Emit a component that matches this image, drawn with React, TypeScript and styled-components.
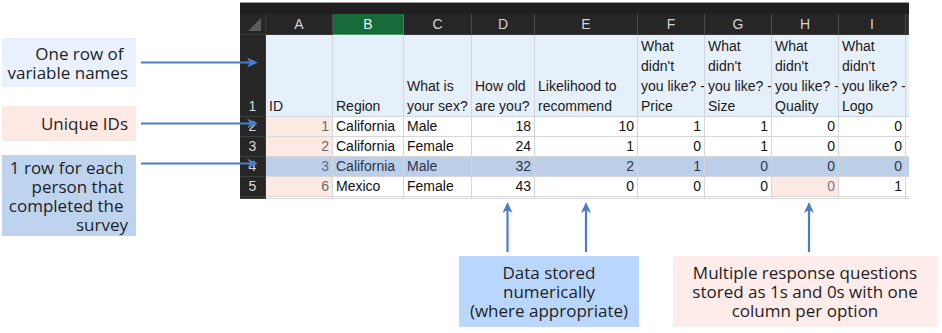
import React from 'react';
import styled, { createGlobalStyle } from 'styled-components';

const GlobalStyle = createGlobalStyle`
  html, body { margin: 0; padding: 0; background: #ffffff; }
  body { width: 942px; height: 333px; overflow: hidden; }
`;

const Page = styled.div`
  position: relative;
  width: 942px;
  height: 333px;
  display: grid;
  grid-template-columns: 240px 669px 1fr;
  grid-template-rows: 200px 1fr;
  font-family: 'Open Sans', 'Liberation Sans', sans-serif;
`;

/* ---------- left notes ---------- */
const NotesColumn = styled.div`
  grid-column: 1;
  grid-row: 1 / span 2;
  display: flex;
  flex-direction: column;
  align-items: flex-start;
  padding: 38px 0 0 2px;
`;

const NoteBox = styled.div<{ $bg: string; $h: number; $mt: number }>`
  width: 134px;
  height: ${(p) => p.$h}px;
  margin-top: ${(p) => p.$mt}px;
  box-sizing: border-box;
  padding-right: 8px;
  background: ${(p) => p.$bg};
  display: flex;
  flex-direction: column;
  justify-content: center;
  align-items: flex-end;
  font-size: 17px;
  line-height: 19px;
  color: #1e1e24;
  white-space: pre;
`;

/* ---------- spreadsheet ---------- */
const Sheet = styled.div`
  grid-column: 2;
  grid-row: 1;
  margin-top: 2px;
  border-top: 1px solid #9a9a9a;
  background: #1f1f1f;
  display: grid;
  grid-template-columns: 26px 67px 71px 68px 63px 103px 67px 67px 67px 67px 3px;
  grid-template-rows: 11px 21px 82px 20px 20px 20px 20px 2px;
  align-self: start;
  font-family: 'Liberation Sans', Arial, sans-serif;
  font-size: 14px;
  overflow: hidden;
`;

const TopStrip = styled.div`
  grid-column: 1 / -1;
  background: #1f1f1f;
`;

const Corner = styled.div`
  position: relative;
  background: #262626;
  border-right: 1px solid #3a3a3a;
  border-bottom: 1px solid #3a3a3a;
  &::after {
    content: '';
    position: absolute;
    right: 4px;
    bottom: 3px;
    width: 0;
    height: 0;
    border-left: 13px solid transparent;
    border-bottom: 13px solid #5c5c5c;
  }
`;

const ColHead = styled.div<{ $active?: boolean }>`
  box-sizing: border-box;
  background: ${(p) => (p.$active ? '#176b3a' : '#262626')};
  border-right: 1px solid ${(p) => (p.$active ? '#2f8a54' : '#4a4a4a')};
  border-bottom: 1px solid ${(p) => (p.$active ? '#4fa06f' : '#3a3a3a')};
  color: ${(p) => (p.$active ? '#e8f2ec' : '#d4d4d4')};
  display: flex;
  align-items: center;
  justify-content: center;
  padding-top: 1px;
  line-height: 19px;
`;

const RowHead = styled.div<{ $tall?: boolean }>`
  box-sizing: border-box;
  background: #262626;
  border-bottom: 1px solid #3f3f3f;
  border-right: 1px solid #3a3a3a;
  color: #d8d8d8;
  display: flex;
  align-items: ${(p) => (p.$tall ? 'flex-end' : 'center')};
  justify-content: center;
  line-height: ${(p) => (p.$tall ? '20px' : '19px')};
`;

const HeaderCell = styled.div`
  box-sizing: border-box;
  background: #e6f0fb;
  border-right: 1px solid #cfd6df;
  border-bottom: 1px solid #cfd6df;
  padding: 0 0 0 3px;
  display: flex;
  flex-direction: column;
  justify-content: flex-end;
  overflow: hidden;
  white-space: nowrap;
  line-height: 20px;
  color: #1a1a1a;
`;

const Cell = styled.div<{ $bg: string; $fg: string; $right?: boolean }>`
  box-sizing: border-box;
  background: ${(p) => p.$bg};
  color: ${(p) => p.$fg};
  border-right: 1px solid #d6d6d6;
  border-bottom: 1px solid #d6d6d6;
  padding: 0 3px;
  line-height: 19px;
  text-align: ${(p) => (p.$right ? 'right' : 'left')};
  white-space: nowrap;
  overflow: hidden;
`;

/* ---------- bottom notes ---------- */
const BottomRow = styled.div`
  grid-column: 2 / span 2;
  grid-row: 2;
  display: flex;
  align-items: flex-start;
  padding: 56px 0 0 219px;
  gap: 34px;
`;

const BottomBox = styled.div<{ $bg: string; $w: number }>`
  width: ${(p) => p.$w}px;
  height: 71px;
  background: ${(p) => p.$bg};
  display: flex;
  flex-direction: column;
  align-items: center;
  justify-content: center;
  font-size: 17px;
  line-height: 19px;
  color: #1e1e24;
  white-space: pre;
`;

/* ---------- arrows overlay ---------- */
const Overlay = styled.svg`
  position: absolute;
  left: 0;
  top: 0;
  width: 942px;
  height: 333px;
  pointer-events: none;
  z-index: 2;
`;

const ARROW = '#4a7dc8';

function Arrow({ x1, y1, x2, y2 }: { x1: number; y1: number; x2: number; y2: number }) {
  const dx = x2 - x1;
  const dy = y2 - y1;
  const len = Math.hypot(dx, dy);
  const ux = dx / len;
  const uy = dy / len;
  const px = -uy;
  const py = ux;
  const L = 11;
  const W = 5;
  const N = 3;
  const bx = x2 - ux * L;
  const by = y2 - uy * L;
  const nx = x2 - ux * (L - N);
  const ny = y2 - uy * (L - N);
  const pts = [
    [x2, y2],
    [bx + px * W, by + py * W],
    [nx, ny],
    [bx - px * W, by - py * W],
  ]
    .map((p) => p.join(','))
    .join(' ');
  return (
    <g>
      <line x1={x1} y1={y1} x2={nx} y2={ny} stroke={ARROW} strokeWidth={2.2} />
      <polygon points={pts} fill={ARROW} />
    </g>
  );
}

/* ---------- data ---------- */
const letters = ['A', 'B', 'C', 'D', 'E', 'F', 'G', 'H', 'I'];

const headers: string[][] = [
  ['ID'],
  ['Region'],
  ['What is', 'your sex?'],
  ['How old', 'are you?'],
  ['Likelihood to', 'recommend'],
  ['What', "didn't", 'you like? -', 'Price'],
  ['What', "didn't", 'you like? -', 'Size'],
  ['What', "didn't", 'you like? -', 'Quality'],
  ['What', "didn't", 'you like? -', 'Logo'],
];

const rows: (string | number)[][] = [
  [1, 'California', 'Male', 18, 10, 1, 1, 0, 0],
  [2, 'California', 'Female', 24, 1, 0, 1, 0, 0],
  [3, 'California', 'Male', 32, 2, 1, 0, 0, 0],
  [6, 'Mexico', 'Female', 43, 0, 0, 0, 0, 1],
];

const SELECTED_ROW = 2;

function cellStyle(r: number, c: number) {
  if (r === SELECTED_ROW) {
    return { bg: '#bccfe9', fg: c === 0 ? '#5e6680' : '#2d3647' };
  }
  if (c === 0) return { bg: '#fde9e4', fg: '#6a6a6a' };
  if (r === 3 && c === 7) return { bg: '#fde9e4', fg: '#7a7a7a' };
  return { bg: '#ffffff', fg: '#111111' };
}

export default function App() {
  return (
    <>
      <GlobalStyle />
      <Page>
        <NotesColumn>
          <NoteBox $bg="#e8f1fd" $h={49} $mt={0}>
            <span>{'One row of\u00a0'}</span>
            <span>variable names</span>
          </NoteBox>
          <NoteBox $bg="#fde9e4" $h={35} $mt={19}>
            <span>Unique IDs</span>
          </NoteBox>
          <NoteBox $bg="#bdd3ee" $h={81} $mt={14}>
            <span>{'1 row for each\u00a0'}</span>
            <span>{'person that\u00a0'}</span>
            <span>{'completed the\u00a0'}</span>
            <span>survey</span>
          </NoteBox>
        </NotesColumn>

        <Sheet>
          <TopStrip />
          <Corner />
          {letters.map((l) => (
            <ColHead key={l} $active={l === 'B'}>
              {l}
            </ColHead>
          ))}
          <ColHead />

          <RowHead $tall>1</RowHead>
          {headers.map((lines, i) => (
            <HeaderCell key={i}>
              {lines.map((t) => (
                <span key={t}>{t}</span>
              ))}
            </HeaderCell>
          ))}
          <HeaderCell />

          {rows.map((row, r) => (
            <React.Fragment key={r}>
              <RowHead>{r + 2}</RowHead>
              {row.map((v, c) => {
                const s = cellStyle(r, c);
                return (
                  <Cell key={c} $bg={s.bg} $fg={s.fg} $right={typeof v === 'number'}>
                    {v}
                  </Cell>
                );
              })}
              <Cell $bg={r === SELECTED_ROW ? '#bccfe9' : '#ffffff'} $fg="#111" />
            </React.Fragment>
          ))}

          <RowHead />
          {letters.map((l) => (
            <Cell key={l} $bg="#ffffff" $fg="#111" />
          ))}
          <Cell $bg="#ffffff" $fg="#111" />
        </Sheet>

        <BottomRow>
          <BottomBox $bg="#b9d7fc" $w={180}>
            <span>Data stored</span>
            <span>numerically</span>
            <span>(where appropriate)</span>
          </BottomBox>
          <BottomBox $bg="#fdece9" $w={264}>
            <span>Multiple response questions</span>
            <span>stored as 1s and 0s with one</span>
            <span>column per option</span>
          </BottomBox>
        </BottomRow>

        <Overlay viewBox="0 0 942 333">
          <Arrow x1={141} y1={62.5} x2={258} y2={62.5} />
          <Arrow x1={141} y1={123.5} x2={258} y2={123.5} />
          <Arrow x1={141} y1={163.5} x2={258} y2={163.5} />
          <Arrow x1={507.5} y1={252} x2={507.5} y2={202} />
          <Arrow x1={586} y1={252} x2={586} y2={202} />
          <Arrow x1={809} y1={252} x2={809} y2={202} />
        </Overlay>
      </Page>
    </>
  );
}
